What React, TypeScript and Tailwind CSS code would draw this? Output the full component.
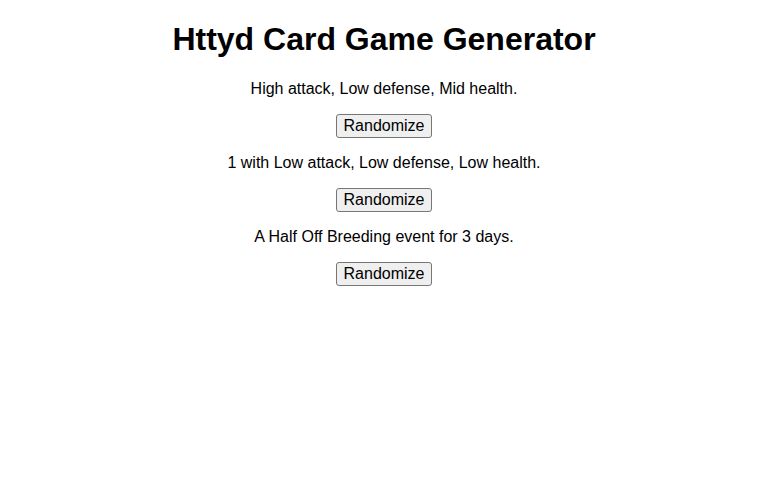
import React from 'react';

const rows = [
  'High attack, Low defense, Mid health.',
  '1 with Low attack, Low defense, Low health.',
  'A Half Off Breeding event for 3 days.',
];

export default function App() {
  return (
    <div className="min-h-screen bg-white text-center text-black font-['Liberation_Sans',Arial,sans-serif]">
      <h1 className="my-[21.44px] text-[32px] font-bold leading-[normal]">Httyd Card Game Generator</h1>
      {rows.map((text) => (
        <div key={text}>
          <p className="my-4 text-[16px] leading-[normal]">{text}</p>
          <div>
            <button className="rounded-[3px] border border-[#767676] bg-[#efefef] px-[7px] py-[2px] text-[16px] leading-[normal] text-black">
              Randomize
            </button>
          </div>
        </div>
      ))}
    </div>
  );
}
